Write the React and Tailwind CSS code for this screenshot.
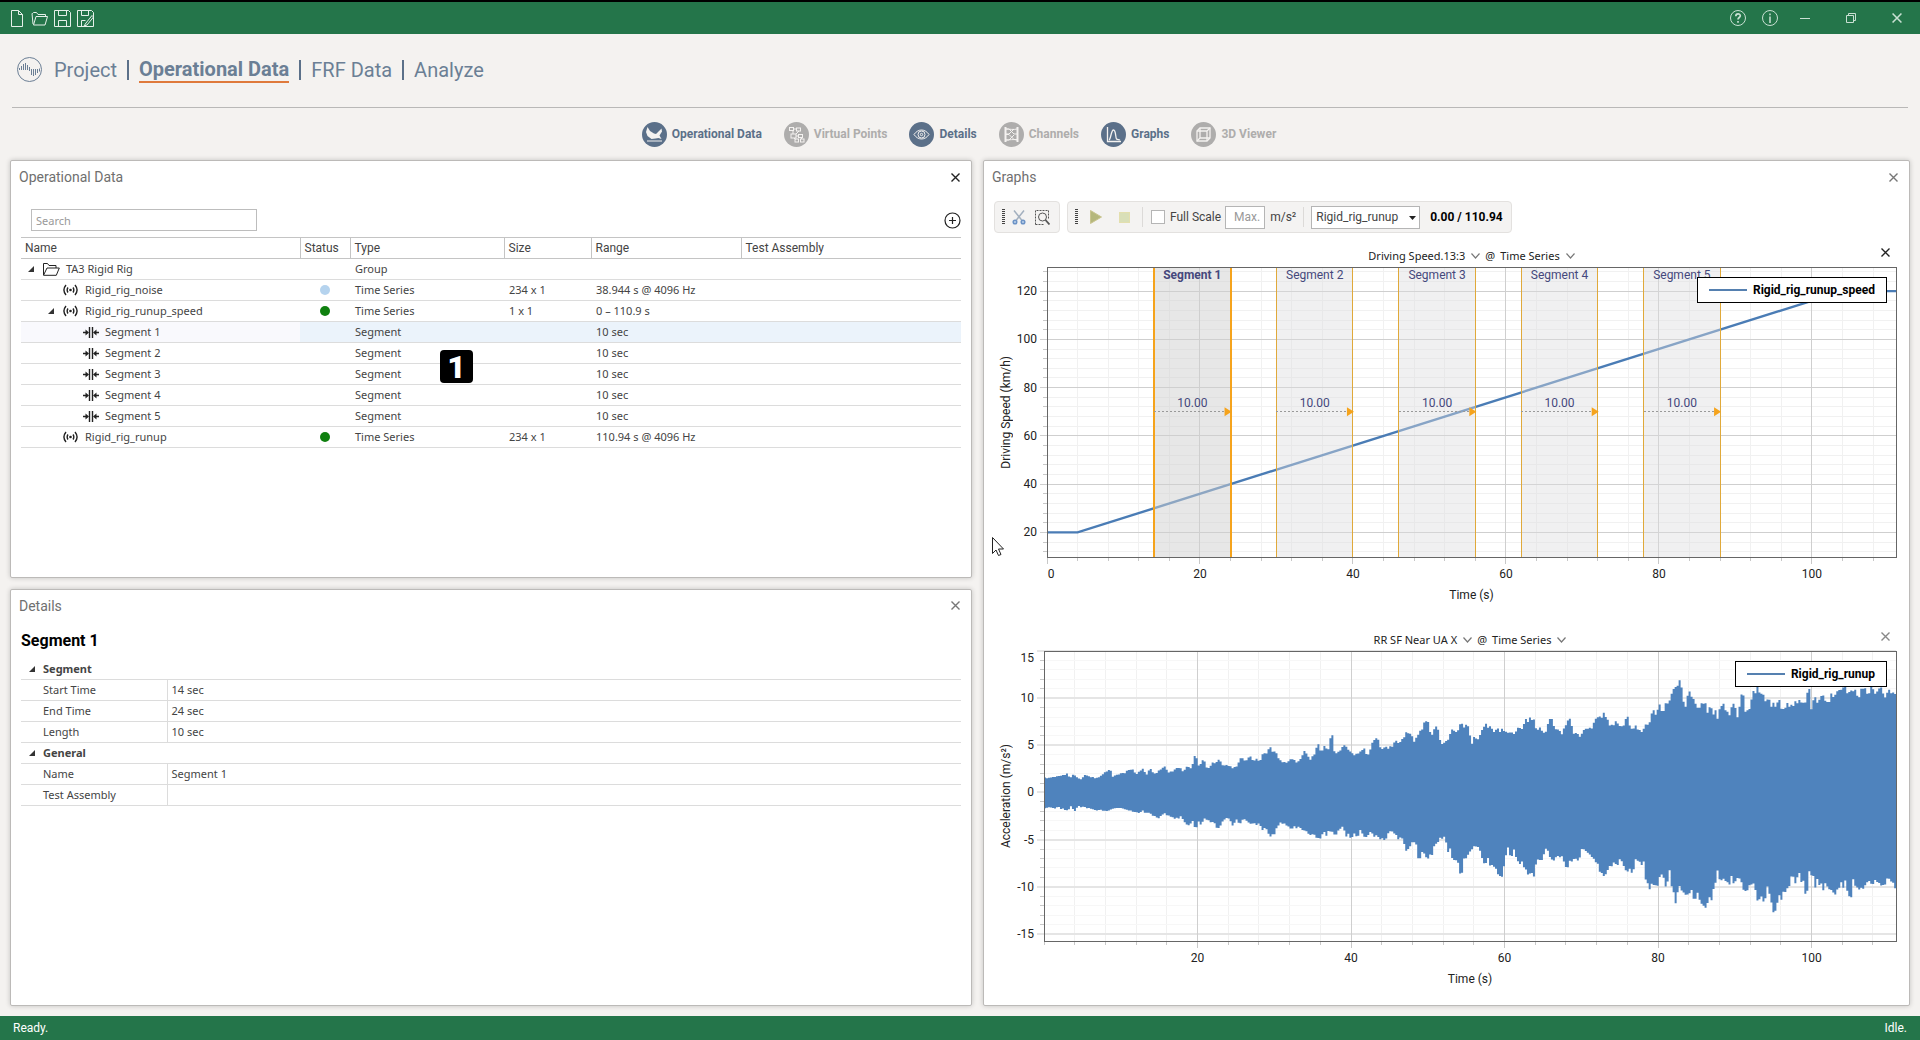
import { useState } from "react";

const tabs = [
  { label: "Operational Data", icon: "shaker", active: true },
  { label: "Virtual Points", icon: "points", active: false },
  { label: "Details", icon: "eye", active: true },
  { label: "Channels", icon: "channels", active: false },
  { label: "Graphs", icon: "graph", active: true },
  { label: "3D Viewer", icon: "cube", active: false },
];

const rows = [
  { name: "TA3 Rigid Rig", level: 0, open: true, icon: "folder", type: "Group" },
  { name: "Rigid_rig_noise", level: 1, icon: "signal", status: "light", type: "Time Series", size: "234 x 1", range: "38.944 s @ 4096 Hz" },
  { name: "Rigid_rig_runup_speed", level: 1, open: true, icon: "signal", status: "green", type: "Time Series", size: "1 x 1", range: "0 – 110.9 s" },
  { name: "Segment 1", level: 2, icon: "segment", type: "Segment", range: "10 sec", selected: true },
  { name: "Segment 2", level: 2, icon: "segment", type: "Segment", range: "10 sec" },
  { name: "Segment 3", level: 2, icon: "segment", type: "Segment", range: "10 sec" },
  { name: "Segment 4", level: 2, icon: "segment", type: "Segment", range: "10 sec" },
  { name: "Segment 5", level: 2, icon: "segment", type: "Segment", range: "10 sec" },
  { name: "Rigid_rig_runup", level: 1, icon: "signal", status: "green", type: "Time Series", size: "234 x 1", range: "110.94 s @ 4096 Hz" },
];

const details = [
  {
    group: "Segment",
    items: [
      ["Start Time", "14 sec"],
      ["End Time", "24 sec"],
      ["Length", "10 sec"],
    ],
  },
  {
    group: "General",
    items: [
      ["Name", "Segment 1"],
      ["Test Assembly", ""],
    ],
  },
];

const segments = [
  { name: "Segment 1", start: 14, end: 24, active: true },
  { name: "Segment 2", start: 30, end: 40 },
  { name: "Segment 3", start: 46, end: 56 },
  { name: "Segment 4", start: 62, end: 72 },
  { name: "Segment 5", start: 78, end: 88 },
];

// peaks of the run-up signal: time, value, time, value, ...
const upper = [
  0, 1.7, 0.4, 1.5, 1.5, 1.7, 3, 2.05, 3.3, 1.3, 3.7, 1.9, 4.8, 1.35, 5.4, 1.9, 6.7, 1.5, 7.4, 1.8, 8.5, 2.5, 8.9, 1.6,
  9.4, 2, 10.3, 2.1, 11.4, 2.5, 12, 1.9, 12.8, 2.55, 13.4, 1.8, 13.8, 2.65, 14.3, 1.9, 15.1, 2.4, 15.6, 2.75, 16.1, 2.1,
  17, 2.4, 17.6, 2.7, 18.1, 2.3, 18.8, 2.9, 19.2, 2.3, 19.7, 4, 20.1, 2.6, 20.7, 3.45, 21.2, 2.5, 22.2, 3.3, 22.9, 3.45,
  23.3, 2.6, 23.7, 3.1, 24.3, 2.7, 25.2, 2.9, 25.6, 3.9, 26, 3.3, 26.8, 3.9, 27.2, 3.2, 27.7, 3.8, 28, 2.7, 28.4, 4.1,
  29, 4.3, 29.4, 4.95, 29.7, 4.3, 30.1, 4.5, 30.5, 3.5, 31.5, 3.3, 32.3, 3.7, 33, 3.2, 33.6, 3.9, 34, 4.5, 34.5, 3.4,
  35.2, 4, 35.7, 5.15, 36.1, 4.3, 36.6, 5.1, 37, 4.3, 37.4, 6.35, 37.7, 4.4, 38.2, 4.3, 39.3, 5.05, 39.9, 4.5, 40.4, 4,
  40.8, 4.2, 41.4, 4.8, 42.3, 4, 43.1, 6, 43.4, 5.8, 43.8, 4.4, 44.4, 4.8, 45.2, 5, 45.9, 5.6, 46.2, 5, 47.1, 6.4,
  47.7, 6.6, 48, 5.1, 48.7, 6.2, 49.5, 7.1, 49.8, 8.2, 50.2, 6.3, 50.8, 6.6, 51.2, 7.1, 51.6, 5.5, 52.5, 5.4, 53.3, 7,
  53.8, 6.3, 54.3, 7.5, 54.6, 6.5, 55, 7.6, 55.4, 6.2, 55.8, 4.5, 56.1, 6.1, 56.4, 5.3, 56.9, 6.2, 57.4, 7.5, 57.6, 6.7,
  57.9, 7.4, 58.2, 6.8, 59, 6.9, 59.3, 5.9, 59.5, 7.1, 60.5, 6.2, 60.8, 6.7, 61.3, 5.9, 61.9, 7.4, 62.3, 7.1, 62.7, 8.1,
  63.1, 7.9, 63.6, 8, 64.1, 7, 65.2, 6.5, 65.6, 6.8, 65.9, 8.3, 66.2, 7.2, 67, 6.8, 67.6, 6.5, 68.4, 8, 68.8, 6.6,
  69.4, 6.6, 69.8, 5.7, 70.5, 7.3, 70.9, 6.7, 71.5, 7.2, 72.3, 8.3, 72.8, 8.5, 73.2, 7.9, 73.8, 7, 74.5, 7.7, 75.1, 6.8,
  76, 8, 76.3, 6.9, 77.1, 7.3, 77.7, 6.6, 78.5, 7.2, 79, 8, 79.4, 9, 79.7, 8, 80.1, 9.3, 80.7, 8.9, 81.2, 9.8, 81.7, 10.4,
  82, 10.9, 82.5, 12, 82.9, 11.7, 83.2, 10, 83.5, 9.2, 83.9, 10.3, 84.3, 10.8, 84.6, 9.4, 84.9, 9.7, 85.2, 8.7, 86, 10.1,
  86.3, 8.5, 86.6, 9.3, 87.1, 8.4, 87.5, 9, 87.7, 7.7, 88, 9.1, 88.5, 9.4, 89.2, 8, 89.9, 9.7, 90.4, 7.9, 90.9, 10.9,
  91.3, 9, 92, 9.3, 92.5, 11, 93, 11.4, 93.5, 10.8, 94, 9.8, 95.1, 9.7, 95.5, 9.1, 95.8, 10.7, 96, 8.1, 96.6, 9.6,
  97, 9, 98, 10, 98.6, 9.9, 99.2, 9.3, 99.6, 11, 99.9, 9.1, 100.4, 10.3, 101, 9.9, 101.4, 10.9, 101.8, 9.8, 102.3, 10.2,
  103, 10.7, 103.6, 11.3, 104.5, 11.2, 105, 10.4, 105.5, 11.2, 106, 10.3, 106.6, 11.3, 107.2, 10.5, 107.8, 11.5,
  108.5, 10.6, 109, 11.4, 109.4, 10.4, 110.2, 10.9, 111, 10.3,
];
const lower = [
  0, 1.8, 0.5, 1.5, 1.1, 1.75, 1.8, 1.55, 2.4, 1.8, 3, 1.95, 3.5, 1.4, 3.9, 1.95, 4.4, 1.5, 5.6, 1.7, 7.3, 1.95, 8.5, 1.95,
  9.2, 1.7, 10.9, 1.85, 11.5, 2.1, 12.2, 2.25, 12.6, 2, 13.5, 2.2, 14.8, 2.75, 15.7, 2.25, 16.6, 2.75, 17.4, 2.8,
  17.7, 2.4, 18.2, 3.1, 18.8, 3.5, 19.2, 3.4, 19.4, 2.5, 19.7, 4.05, 20, 2.9, 20.4, 3.5, 20.7, 2.7, 21.5, 3.1, 22.3, 3.5,
  22.7, 4.05, 23.1, 3.1, 23.9, 2.6, 24.6, 3.5, 25, 2.8, 25.5, 3.4, 26, 2.8, 26.6, 3.2, 27.3, 3.5, 28, 3.4, 28.4, 4,
  29, 3.95, 29.4, 4.8, 29.8, 4.65, 30.2, 4, 30.5, 3.3, 31.7, 3.5, 32.2, 3.95, 32.7, 3.7, 33.6, 4, 34.5, 4.5, 35.1, 4.3,
  35.6, 4.95, 35.9, 5.2, 36.4, 4, 36.7, 4.6, 37.1, 4.2, 38, 4.45, 38.6, 3.7, 39.1, 3.8, 39.4, 4.9, 39.7, 3.9, 40, 5,
  40.4, 4.2, 40.7, 4.8, 41.2, 3.9, 41.9, 4.95, 42.3, 4.2, 43, 4.7, 43.4, 4.4, 43.8, 5, 44.3, 5.2, 44.9, 4.2, 45.6, 4.3,
  46.2, 5, 46.7, 4.9, 47.2, 6.25, 47.5, 6, 47.8, 5.3, 48.4, 5.4, 48.9, 7.35, 49.1, 6.1, 49.7, 7, 50.4, 6.95, 50.7, 6,
  51.2, 5.5, 51.6, 4.75, 52.2, 5, 52.7, 6.25, 53, 5.4, 53.2, 7.05, 53.8, 7.3, 54.3, 8.7, 54.5, 8.2, 54.8, 6, 55, 7,
  55.5, 6.1, 56.1, 5.6, 56.6, 5.8, 57, 6.5, 57.4, 7.9, 57.7, 7, 58.4, 8.1, 58.7, 7.4, 59, 9, 59.2, 7.8, 59.5, 9.2,
  59.8, 7.8, 60.4, 6, 60.8, 7, 61.1, 6.1, 61.8, 7.5, 62.3, 7.6, 62.7, 8.2, 63.2, 8.9, 63.7, 9.2, 64, 7.5, 64.8, 7.1,
  65.4, 5.9, 65.8, 6.7, 66.1, 7.6, 66.5, 6.7, 67.2, 7.1, 67.6, 7.1, 68, 7.9, 68.5, 7.7, 68.9, 7.2, 69.6, 7.3, 70, 6.1,
  70.5, 6, 71.1, 6.8, 72, 7.8, 72.7, 8.9, 73.3, 8.7, 73.8, 7.9, 74.4, 7.9, 75.1, 7.2, 75.9, 8.7, 76.2, 7.6, 76.6, 8.7,
  77, 7.4, 77.5, 7.8, 78.2, 7.6, 78.5, 9.6, 78.9, 10.4, 79.9, 10.4, 80.1, 9.5, 80.5, 8.5, 80.9, 10, 81.3, 8.9, 81.6, 8.5,
  81.9, 10.6, 82.3, 11.9, 82.6, 10.2, 83.4, 11.1, 83.9, 11, 84.3, 10.3, 84.7, 11.5, 85, 10.4, 85.6, 12.2, 86.1, 12.4,
  86.4, 11.4, 86.8, 11.9, 87.2, 10.5, 87.6, 8.5, 88, 9.2, 88.5, 9.6, 89, 9.9, 89.5, 9.4, 90, 9.7, 90.5, 9, 91.1, 10.4,
  91.5, 11.1, 91.9, 9.4, 92.4, 9.9, 93, 11.8, 93.4, 11.1, 93.9, 11.8, 94.2, 9.9, 94.6, 10.8, 95, 13, 95.4, 12.2,
  95.7, 10.6, 96.1, 11.5, 96.5, 10.6, 97, 9.8, 97.4, 8.9, 97.9, 10.1, 98.2, 8.8, 98.9, 9.8, 99.3, 10.8, 99.6, 8,
  100.2, 9.1, 100.4, 10.2, 100.8, 9.4, 101.5, 10.4, 101.9, 10.1, 102.6, 10.5, 103.2, 11, 103.6, 10.3, 104.5, 9.8,
  105, 11.7, 105.3, 9.9, 105.7, 9.7, 106.2, 11, 106.7, 10.3, 107.5, 9.7, 108.4, 9.7, 109.3, 10.2, 110.1, 9.2, 110.9, 10.6,
];

const valueAt = (list, t) => {
  let i = 0;
  while (i < list.length - 4 && list[i + 2] < t) i += 2;
  const k = Math.min(1, Math.max(0, (t - list[i]) / (list[i + 2] - list[i])));
  return list[i + 1] + (list[i + 3] - list[i + 1]) * k;
};

// highest value inside one column of the wave
const peakAt = (list, t, step) =>
  Math.max(valueAt(list, t), valueAt(list, t + step / 3), valueAt(list, t + (step * 2) / 3));

const noise = (n) => {
  const v = Math.sin(n * 127.1) * 43758.5453;
  return v - Math.floor(v);
};

const buildWave = () => {
  const step = 0.26;
  let top = "";
  let bottom = "";
  for (let i = 0; i * step < 111; i++) {
    const t = i * step;
    const end = Math.min(111, t + step);
    const up = peakAt(upper, t, step) * (0.93 + noise(i) * 0.08);
    const down = peakAt(lower, t, step) * (0.93 + noise(i + 900) * 0.08);
    top += `L${t.toFixed(2)} ${(15 - up).toFixed(2)}H${end.toFixed(2)}`;
    bottom = `L${end.toFixed(2)} ${(15 + down).toFixed(2)}H${t.toFixed(2)}` + bottom;
  }
  return `M0 15${top}${bottom}Z`;
};
const wavePath = buildWave();

const range = (from, to, step) => {
  const list = [];
  for (let v = from; v <= to; v += step) list.push(v);
  return list;
};

function CloseIcon({ className }) {
  return (
    <svg viewBox="0 0 9 9" className={className} stroke="currentColor" strokeWidth="1.4" fill="none">
      <path d="M.5.5l8 8M8.5.5l-8 8" />
    </svg>
  );
}

function TabIcon({ name }) {
  return (
    <svg viewBox="0 0 25 25" className="h-[25px] w-[25px]" fill="none" stroke="#f4f2f0" strokeWidth="1">
      {name === "shaker" && (
        <g fill="#f4f2f0" stroke="none">
          <path d="M5.500 5l2.500 4 4 2.500 2 .5 5.500-5.500.5 3-2.500 4 2 3.500-3-1-3 .5-4 .5-4-3-1.500-4z" />
          <path d="M5 18.500h15v1H5z" />
        </g>
      )}
      {name === "points" && (
        <g>
          <rect x="5.500" y="5.500" width="4" height="3" />
          <rect x="12.500" y="6" width="4" height="3" />
          <rect x="7" y="12" width="5" height="4" />
          <rect x="14.500" y="12.500" width="4" height="3" />
          <rect x="11" y="17" width="3.500" height="3" />
          <rect x="16.500" y="17" width="3.500" height="3" />
          <path d="M9.500 7h3M9 8.500V12M15 9l-3 3M12 14h2.500M10 16l1.500 1.500M17.500 15.500v1.500" />
        </g>
      )}
      {name === "eye" && (
        <g>
          <path d="M5 12.500c4-6 11-6 15 0c-4 6-11 6-15 0z" />
          <circle cx="12.500" cy="12.500" r="3.500" />
          <circle cx="12.500" cy="12.500" r="1.200" />
        </g>
      )}
      {name === "channels" && (
        <g>
          <path d="M6.500 5v15M18.500 5v15" strokeWidth="2" />
          <path d="M7 7h3l5 5h3M7 7c3 0 8 1 11 0M7 12h3l5-5M7 12.500h3l5 5h3M7 18h3l5-5M7 18c3 0 8-1 11 0" />
        </g>
      )}
      {name === "graph" && (
        <g>
          <path d="M6.500 5v14.500H20" strokeWidth="1.300" />
          <path d="M8 18c2-1 2-10 4.500-10s2 8 3 9 2 .5 3.500 1" strokeWidth="1.300" />
        </g>
      )}
      {name === "cube" && (
        <g strokeWidth="1.300">
          <path d="M6 9l3-3h10v10l-3 3H6z" />
          <path d="M6 9h10v10M16 9l3-3M9 6v10h10M6 19l3-3" />
        </g>
      )}
    </svg>
  );
}

function RowIcon({ name }) {
  if (name === "folder") {
    return (
      <svg viewBox="0 0 17 13" className="h-[13px] w-[17px]" fill="none" stroke="#222" strokeWidth="1">
        <path d="M.5 12V.5h4l1.500 2h7v2.500M.5 12.300L4 5h12.300l-3 7.300z" />
      </svg>
    );
  }
  if (name === "signal") {
    return (
      <svg viewBox="0 0 15 12" className="h-3 w-[15px]" fill="none" stroke="#222" strokeWidth="1.400">
        <path d="M3 1c-2.500 3-2.500 7 0 10M12 1c2.500 3 2.500 7 0 10M5 3.500c-1 1.500-1 3.500 0 5M10 3.500c1 1.500 1 3.500 0 5" />
        <circle cx="7.500" cy="6" r="1.300" fill="#222" stroke="none" />
      </svg>
    );
  }
  return (
    <svg viewBox="0 0 16 13" className="h-[13px] w-4" fill="none" stroke="#222" strokeWidth="1.400">
      <path d="M6.500 1v11M9.500 1v11M0 6.500h3M16 6.500h-3" />
      <path d="M2.500 3.500l3.500 3-3.500 3zM13.500 3.500l-3.500 3 3.500 3z" fill="#222" stroke="none" />
    </svg>
  );
}

function Expander() {
  return (
    <svg viewBox="0 0 6 6" className="h-[6px] w-[6px]">
      <path d="M6 0v6H0z" fill="#333" />
    </svg>
  );
}

function TitleBar() {
  const icon = "h-[17px] w-[17px]";
  return (
    <header className="flex h-[34px] items-center border-t-2 border-black bg-[#24754a] pr-[18px] pl-2 text-[#e6f0ea]">
      <div className="flex gap-[6px]">
        <button aria-label="New">
          <svg viewBox="0 0 17 17" className={icon} fill="none" stroke="currentColor">
            <path d="M3.500.5h7l4 4v12h-11zM10.500.5v4h4" />
          </svg>
        </button>
        <button aria-label="Open">
          <svg viewBox="0 0 17 17" className={icon} fill="none" stroke="currentColor">
            <path d="M2 14L1 3.500h.5l1-1h3l1.500 2h7.500v2M2.500 15L5 6.500h11.500L14 15z" />
          </svg>
        </button>
        <button aria-label="Save">
          <svg viewBox="0 0 17 17" className={icon} fill="none" stroke="currentColor">
            <path d="M.5.500h14l2 2v14H.5zM4.500.5v5h8v-5M4.500 16.500v-6h8v6" />
          </svg>
        </button>
        <button aria-label="Save as">
          <svg viewBox="0 0 17 17" className={icon} fill="none" stroke="currentColor">
            <path d="M.5.500h14l2 2v14H.5zM4.500.5v5h7v-5M4.500 16.500v-6h4M9 13l-2 3 3-1 6.500-8-1.500-1.500z" />
          </svg>
        </button>
      </div>
      <div className="ml-auto flex items-center text-[#c9e0d3]">
        <button aria-label="Help" className="mr-4">
          <svg viewBox="0 0 16 16" className="h-4 w-4" fill="none" stroke="currentColor">
            <circle cx="8" cy="8" r="7.500" />
            <path d="M5.800 6.200c0-3 4.500-3 4.500-.4C10.300 7.500 8 7.500 8 9.500M8 11v1.700" strokeWidth="1.700" />
          </svg>
        </button>
        <button aria-label="About" className="mr-[22px]">
          <svg viewBox="0 0 16 16" className="h-4 w-4" fill="none" stroke="currentColor">
            <circle cx="8" cy="8" r="7.500" />
            <path d="M8 3.500v1.700M8 6.500v6.500" strokeWidth="1.500" />
          </svg>
        </button>
        <button aria-label="Minimize" className="mr-9">
          <svg viewBox="0 0 10 10" className="h-[10px] w-[10px]" stroke="currentColor">
            <path d="M0 5.500h10" />
          </svg>
        </button>
        <button aria-label="Restore" className="mr-9">
          <svg viewBox="0 0 10 10" className="h-[10px] w-[10px]" fill="none" stroke="currentColor">
            <path d="M.5 2.500h7v7h-7zM2.500 2.500v-2h7v7h-2" />
          </svg>
        </button>
        <button aria-label="Close">
          <CloseIcon className="h-[10px] w-[10px]" />
        </button>
      </div>
    </header>
  );
}

function MainNav() {
  return (
    <nav className="mx-3 flex h-[74px] items-center border-b border-[#b9b8b7] pb-[2px] pl-[5px] text-xl text-[#6b7f95]">
      <svg viewBox="0 0 25 25" className="mr-3 h-[25px] w-[25px]" fill="none" stroke="#6b7f95" strokeWidth="1">
        <circle cx="12.500" cy="12.500" r="12" />
        <path d="M2.500 11v2M4.500 9v4M6.500 7v6M8.500 6v7M10.500 8v5M12.500 10v4M14.500 12v6M16.500 12v7M18.500 12v6M20.500 12v4M22.500 11.500v3" />
      </svg>
      <a href="#project">Project</a>
      <span className="mx-[10px] h-5 w-[2px] bg-[#5b7089]" />
      <a href="#operational" className="border-b-2 border-[#df7a3c] leading-6 font-bold">
        Operational Data
      </a>
      <span className="mx-[10px] h-5 w-[2px] bg-[#5b7089]" />
      <a href="#frf">FRF Data</a>
      <span className="mx-[10px] h-5 w-[2px] bg-[#5b7089]" />
      <a href="#analyze">Analyze</a>
    </nav>
  );
}

function Panel({ title, muted, className = "", children }) {
  return (
    <section
      className={`relative flex flex-col rounded-xs border border-[#bcbab8] bg-white shadow-[0_0_5px_rgba(0,0,0,0.2)] ${className}`}
    >
      <div className="flex h-8 shrink-0 items-center justify-between pr-[11px] pl-2">
        <h2 className="text-sm text-[#6f6f6f]">{title}</h2>
        <button aria-label={`Close ${title}`} className={muted ? "text-[#777]" : "text-[#222]"}>
          <CloseIcon className="h-[9px] w-[9px]" />
        </button>
      </div>
      {children}
    </section>
  );
}

function OperationalData() {
  const indent = ["pl-[7px]", "pl-[27px]", "pl-[47px]"];
  const th = "border-l border-[#c4c4c4] pl-1 text-left font-normal";
  return (
    <Panel title="Operational Data" className="flex-1">
      <div className="mt-4 flex items-center justify-between pr-[10px] pl-5">
        <input
          type="text"
          placeholder="Search"
          aria-label="Search"
          className="h-[22px] w-[226px] border border-[#bdbdbd] px-1 font-['Noto_Sans',sans-serif] text-[11px] placeholder:text-[#999]"
        />
        <button aria-label="Add">
          <svg viewBox="0 0 17 17" className="h-[17px] w-[17px]" fill="none" stroke="#222" strokeWidth="1.200">
            <circle cx="8.500" cy="8.500" r="7.500" />
            <path d="M8.500 5v7M5 8.500h7" />
          </svg>
        </button>
      </div>
      <div className="mx-[10px] mt-[6px]">
        <table className="w-full table-fixed border-collapse text-[#444]">
          <colgroup>
            <col className="w-[279px]" />
            <col className="w-[50px]" />
            <col className="w-[154px]" />
            <col className="w-[87px]" />
            <col className="w-[150px]" />
            <col />
          </colgroup>
          <thead>
            <tr className="h-[21px] border-y border-[#c4c4c4] text-xs">
              <th className="pb-px pl-1 text-left font-normal">Name</th>
              <th className={th}>Status</th>
              <th className={th}>Type</th>
              <th className={th}>Size</th>
              <th className={th}>Range</th>
              <th className={th}>Test Assembly</th>
            </tr>
          </thead>
          <tbody className="font-['Noto_Sans',sans-serif] text-[11px] leading-4">
            {rows.map((row) => (
              <tr key={row.name} className={`h-[21px] border-b border-[#dcdcdc] ${row.selected ? "bg-[#ebf3fb]" : ""}`}>
                <td className={`${row.selected ? "bg-[#f9f9fd]" : ""} ${indent[row.level]}`}>
                  <div className="flex items-center">
                    <span className="mr-2 w-[7px]">{row.open && <Expander />}</span>
                    <RowIcon name={row.icon} />
                    <span className={row.icon === "signal" ? "ml-[7px]" : "ml-[6px]"}>{row.name}</span>
                  </div>
                </td>
                <td>
                  {row.status && (
                    <span
                      className={`mx-auto block h-[10px] w-[10px] rounded-full ${
                        row.status === "green" ? "bg-[#0f800f]" : "bg-[#b5d3ee]"
                      }`}
                    />
                  )}
                </td>
                <td className="pl-[5px]">{row.type}</td>
                <td className="pl-[5px]">{row.size}</td>
                <td className="pl-[5px]">{row.range}</td>
                <td />
              </tr>
            ))}
          </tbody>
        </table>
      </div>
      <span className="absolute top-[189px] left-[429px] flex h-[33px] w-[33px] items-center justify-center rounded-sm bg-black text-[32px] leading-none font-black text-white">
        1
      </span>
    </Panel>
  );
}

function Details() {
  return (
    <Panel title="Details" muted className="flex-1">
      <h3 className="mt-[7px] pl-[10px] text-base leading-6 font-bold text-black">Segment 1</h3>
      <table className="mx-[10px] mt-[6px] table-fixed border-collapse font-['Noto_Sans',sans-serif] text-[11px] leading-4 text-[#444]">
        <colgroup>
          <col className="w-[146px]" />
          <col />
        </colgroup>
        {details.map((block) => (
          <tbody key={block.group}>
            <tr className="h-[21px] border-b border-[#dcdcdc]">
              <th colSpan="2" className="pl-2 text-left font-bold">
                <div className="flex items-center gap-2">
                  <Expander />
                  {block.group}
                </div>
              </th>
            </tr>
            {block.items.map(([key, value]) => (
              <tr key={key} className="h-[21px] border-b border-[#dcdcdc]">
                <th className="border-r border-[#dcdcdc] pl-[22px] text-left font-normal">{key}</th>
                <td className="pl-1">{value}</td>
              </tr>
            ))}
          </tbody>
        ))}
      </table>
    </Panel>
  );
}

function Grip() {
  return <span className="h-4 w-[3px] bg-[repeating-linear-gradient(#444_0_1px,transparent_1px_2px)]" />;
}

function Toolbar() {
  const [fullScale, setFullScale] = useState(false);
  const group = "flex h-8 items-center rounded-sm border border-[#e3e1df] bg-[#f4f3f2]";
  return (
    <div className="mt-2 flex gap-[7px] pl-[10px] text-xs text-[#444]">
      <div className={`${group} w-[66px] pl-[7px]`}>
        <Grip />
        <button aria-label="Cut" className="ml-[7px]">
          <svg viewBox="0 0 14 15" className="h-[15px] w-[14px]" fill="none" stroke="#a3b0bf" strokeWidth="1.500">
            <path d="M2 .5l8 10M12 .5l-8 10" />
            <circle cx="3" cy="12" r="1.800" stroke="#6c93c6" fill="#b9cfe9" />
            <circle cx="11" cy="12" r="1.800" stroke="#6c93c6" fill="#b9cfe9" />
          </svg>
        </button>
        <button aria-label="Zoom to selection" className="ml-[9px]">
          <svg viewBox="0 0 15 15" className="h-[15px] w-[15px]" fill="none" stroke="#555">
            <path d="M.5 14.500V.5h13v8M.5 14.500h9" strokeDasharray="2 1" />
            <circle cx="7.500" cy="7" r="4" />
            <path d="M10.500 10l4 4.500" strokeWidth="1.800" />
          </svg>
        </button>
      </div>
      <div className={`${group} pr-2 pl-[7px]`}>
        <Grip />
        <button aria-label="Play" className="ml-3">
          <svg viewBox="0 0 12 14" className="h-[14px] w-3">
            <path d="M.5.5L11.500 7l-11 6.500z" fill="#b5b77c" stroke="#c8c48f" />
          </svg>
        </button>
        <button aria-label="Stop" className="ml-[17px] h-[11px] w-[11px] border border-[#e3dfae] bg-[#d9dfb8]" />
        <span className="mr-2 ml-3 h-5 w-px bg-[#dcdad8]" />
        <label className="flex items-center gap-[5px]">
          <input
            type="checkbox"
            checked={fullScale}
            onChange={(e) => setFullScale(e.target.checked)}
            className="h-[14px] w-[14px] appearance-none border border-[#b5b5b5] bg-white checked:bg-[#5b7089]"
          />
          Full Scale
        </label>
        <input
          type="text"
          placeholder="Max."
          aria-label="Maximum"
          className="ml-1 h-[23px] w-10 border border-[#b5b5b5] bg-white pr-1 text-right placeholder:text-[#999]"
        />
        <span className="ml-[5px]">m/s²</span>
        <span className="mx-[7px] h-5 w-px bg-[#dcdad8]" />
        <div className="relative">
          <select
            aria-label="Signal"
            className="block h-[23px] w-[109px] appearance-none border border-[#b5b5b5] bg-white pl-1 text-[#444]"
          >
            <option>Rigid_rig_runup</option>
            <option>Rigid_rig_noise</option>
          </select>
          <svg viewBox="0 0 7 4" className="pointer-events-none absolute top-[10px] right-1 h-1 w-[7px]">
            <path d="M0 0h7L3.500 4z" fill="#222" />
          </svg>
        </div>
        <span className="ml-[10px] font-bold text-black">0.00 / 110.94</span>
      </div>
    </div>
  );
}

function Picker({ children }) {
  return (
    <button className="flex items-center gap-[6px]">
      {children}
      <svg viewBox="0 0 9 6" className="h-[6px] w-[9px]" fill="none" stroke="#777" strokeWidth="1.200">
        <path d="M.5.500l4 4.500 4-4.500" />
      </svg>
    </button>
  );
}

function Chart({ title, legend, yTitle, gutter, max, yMin, yMax, xTicks, yTicks, yMinor, grid, muted, children, overlay }) {
  const x = (v) => `${((v / max) * 100).toFixed(3)}%`;
  const y = (v) => `${(((yMax - v) / (yMax - yMin)) * 100).toFixed(3)}%`;
  return (
    <div className="flex flex-1 flex-col pt-3 pr-[13px]">
      <div className="flex h-[22px] items-center">
        <div className={`shrink-0 ${gutter}`} />
        <div className="relative flex flex-1 items-center justify-center gap-[5px] font-['Noto_Sans',sans-serif] text-[11px] text-[#222]">
          <Picker>{title}</Picker>
          <span>@</span>
          <Picker>Time Series</Picker>
          <button
            aria-label={`Close ${title}`}
            className={`absolute top-0 right-[6px] ${muted ? "text-[#888]" : "text-[#222]"}`}
          >
            <CloseIcon className="h-[9px] w-[9px]" />
          </button>
        </div>
      </div>
      <div className="flex flex-1">
        <div className={`flex shrink-0 items-center pl-[14px] ${gutter}`}>
          <span className="rotate-180 text-xs text-[#222] [writing-mode:vertical-rl]">{yTitle}</span>
        </div>
        <div className="relative flex-1">
          <svg className="absolute inset-0 h-full w-full overflow-visible text-xs" fill="#222">
            <g shapeRendering="crispEdges">
              {range(0, max, 4).map((v) => (
                <g key={v}>
                  <line x1={x(v)} x2={x(v)} y1="0" y2="100%" stroke="#f1f1f1" />
                  <svg x={x(v)} y="100%" overflow="visible">
                    <line y2={xTicks.includes(v) ? 7 : 4} stroke="#c8c8c8" />
                  </svg>
                </g>
              ))}
              {yMinor.map((v) => (
                <line key={v} x1="0" x2="100%" y1={y(v)} y2={y(v)} stroke={grid.minor} />
              ))}
              {yMinor.map((v) => (
                <line key={v} x1="-4" x2="0" y1={y(v)} y2={y(v)} stroke="#c8c8c8" />
              ))}
              {yTicks.map((v) => (
                <line key={v} x1="-7" x2="100%" y1={y(v)} y2={y(v)} stroke={grid.major} strokeWidth={grid.width} />
              ))}
              {xTicks.map((v) => (
                <line key={v} x1={x(v)} x2={x(v)} y1="0" y2="100%" stroke="#cfcfcf" />
              ))}
            </g>
            {children}
            {overlay && overlay(x, y)}
            <rect width="100%" height="100%" fill="none" stroke="#666" shapeRendering="crispEdges" />
            {yTicks.map((v) => (
              <text key={v} x="-10" y={y(v)} dy={v === yMax ? 11 : 4} textAnchor="end">
                {v}
              </text>
            ))}
            {xTicks.map((v) => (
              <text key={v} x={x(v)} y="100%" dx={v === 0 ? 4 : 0} dy="21" textAnchor="middle">
                {v}
              </text>
            ))}
          </svg>
          <div className="absolute top-[10px] right-[9px] flex h-[26px] items-center gap-[6px] border border-black bg-white px-[11px] text-xs font-bold text-black">
            <span className="h-[2px] w-[38px] bg-[#5580b0]" />
            {legend}
          </div>
        </div>
      </div>
      <div className="flex h-[60px]">
        <div className={`shrink-0 ${gutter}`} />
        <div className="flex-1 pt-[30px] text-center text-xs text-[#222]">Time (s)</div>
      </div>
    </div>
  );
}

function SegmentBands(x, y) {
  return segments.map((s) => {
    const stroke = s.active ? "#f5a31c" : "#e0a93a";
    const width = s.active ? 2 : 1;
    return (
      <svg key={s.name} x={x(s.start)} width={x(s.end - s.start)} height="100%" overflow="visible">
        <rect width="100%" height="100%" fill={s.active ? "#d0d0d0" : "#dcdcde"} fillOpacity={s.active ? 0.5 : 0.42} />
        <g shapeRendering="crispEdges">
          <line y2="100%" stroke={stroke} strokeWidth={width} />
          <line x1="100%" x2="100%" y2="100%" stroke={stroke} strokeWidth={width} />
          <line x2="100%" y1={y(70)} y2={y(70)} stroke="#999" strokeDasharray="2 2" />
        </g>
        <text x="50%" y="12" textAnchor="middle" fill="#45487c" fontWeight={s.active ? 700 : 400}>
          {s.name}
        </text>
        <text x="50%" y={y(70)} dy="-5" textAnchor="middle" fill="#45487c">
          10.00
        </text>
        <svg x="100%" y={y(70)} overflow="visible">
          <path d="M-6-4.500L1 0l-7 4.500z" fill="#f5a31c" />
        </svg>
      </svg>
    );
  });
}

function Graphs() {
  return (
    <Panel title="Graphs" muted className="pb-1">
      <Toolbar />
      <Chart
        title="Driving Speed.13:3"
        legend="Rigid_rig_runup_speed"
        yTitle="Driving Speed (km/h)"
        gutter="w-[63px]"
        max={111}
        yMin={9.8}
        yMax={130}
        xTicks={[0, 20, 40, 60, 80, 100]}
        yTicks={[20, 40, 60, 80, 100, 120]}
        yMinor={range(12, 128, 4)}
        grid={{ minor: "#f1f1f1", major: "#cfcfcf", width: 1 }}
        overlay={SegmentBands}
      >
        <svg width="100%" height="100%" viewBox="0 0 111 120.2" preserveAspectRatio="none">
          <path
            d="M0 110H4L104 10H111"
            fill="none"
            stroke="#4a7cb5"
            strokeWidth="2.4"
            vectorEffect="non-scaling-stroke"
          />
        </svg>
      </Chart>
      <Chart
        title="RR SF Near UA X"
        legend="Rigid_rig_runup"
        yTitle="Acceleration (m/s²)"
        gutter="w-[60px]"
        max={111}
        yMin={-15.75}
        yMax={15}
        xTicks={[20, 40, 60, 80, 100]}
        yTicks={[-15, -10, -5, 0, 5, 10, 15]}
        yMinor={range(-15, 14, 1)}
        grid={{ minor: "#f7f7f7", major: "#e5e5e5", width: 2 }}
        muted
      >
        <svg width="100%" height="100%" viewBox="0 0 111 30.75" preserveAspectRatio="none">
          <path d={wavePath} fill="#4f83bd" />
        </svg>
      </Chart>
    </Panel>
  );
}

function App() {
  return (
    <div className="flex min-h-screen flex-col bg-[#f4f2f0] font-[Roboto,sans-serif]">
      <TitleBar />
      <MainNav />
      <div className="flex h-[52px] items-center justify-center gap-[22px] pr-[2px] text-xs font-bold">
        {tabs.map((tab) => (
          <button key={tab.label} className={`flex items-center gap-[5px] ${tab.active ? "text-[#5b7089]" : "text-[#aeadac]"}`}>
            <span className={`rounded-full ${tab.active ? "bg-[#5b7089]" : "bg-[#aeadac]"}`}>
              <TabIcon name={tab.icon} />
            </span>
            {tab.label}
          </button>
        ))}
      </div>
      <main className="relative grid flex-1 grid-cols-[962fr_927fr] gap-[11px] pr-[10px] pb-[10px] pl-[10px]">
        <div className="flex flex-col gap-[11px]">
          <OperationalData />
          <Details />
        </div>
        <Graphs />
        <svg viewBox="0 0 13 20" className="absolute top-[377px] left-[992px] h-5 w-[13px]" fill="#fff" stroke="#222">
          <path d="M.5.500v16l3.500-3.500 2.500 5.500 2.500-1-2.500-5.500h5z" />
        </svg>
      </main>
      <footer className="flex h-6 items-center justify-between bg-[#24754a] px-[13px] text-xs text-white">
        <span>Ready.</span>
        <span>Idle.</span>
      </footer>
    </div>
  );
}

export default App;
